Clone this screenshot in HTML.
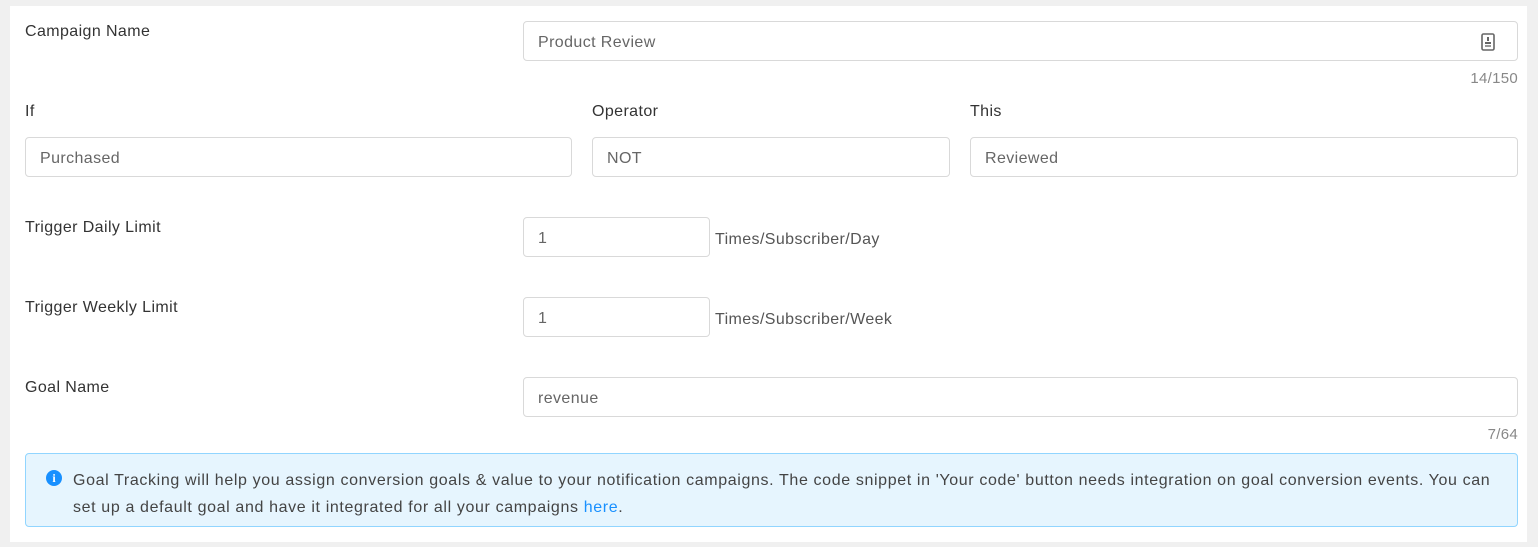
<!DOCTYPE html>
<html><head><style>
body{margin:0;width:1538px;height:547px;background:#f0f0f0;font-family:"Liberation Sans",sans-serif;color:#333;position:relative;overflow:hidden;letter-spacing:0.4px}
.card{position:absolute;left:10px;top:6px;width:1517px;height:536px;background:#fff}
.a{position:absolute}
.lbl{font-size:16px;color:#333}
.in{position:absolute;box-sizing:border-box;border:1px solid #d9d9d9;border-radius:4px;height:40px;font-size:16px;color:#666;padding:2px 14px 0;line-height:38px;background:#fff}
.cnt{font-size:15px;color:#888;text-align:right;letter-spacing:0.3px}
.info{position:absolute;left:25px;top:453px;width:1493px;height:74px;box-sizing:border-box;background:#e6f5fe;border:1px solid #91d5ff;border-radius:4px;padding:13px 10px 0 47px;font-size:16px;line-height:27px;color:#444;letter-spacing:0.63px;white-space:nowrap}
.ic{position:absolute;left:20px;top:16px;width:16px;height:16px;border-radius:50%;background:#1890ff;color:#fff;font-size:12px;font-weight:bold;text-align:center;line-height:16px;font-family:"Liberation Serif",serif;letter-spacing:0}
</style></head><body>
<div class="card"></div>
<div class="a lbl" style="left:25px;top:23px">Campaign Name</div>
<div class="in" style="left:523px;top:21px;width:995px">Product Review
<svg style="position:absolute;right:22px;top:11px" width="14" height="18" viewBox="0 0 14 18"><rect x="1" y="1" width="12" height="16" rx="1.5" fill="none" stroke="#666" stroke-width="1.6"/><rect x="6" y="4" width="2" height="4" fill="#666"/><rect x="4" y="9" width="6" height="2" fill="#666"/><rect x="4" y="12" width="6" height="2" fill="#999"/></svg></div>
<div class="a cnt" style="left:1400px;top:70px;width:118px">14/150</div>
<div class="a lbl" style="left:25px;top:103px">If</div>
<div class="a lbl" style="left:592px;top:103px">Operator</div>
<div class="a lbl" style="left:970px;top:103px">This</div>
<div class="in" style="left:25px;top:137px;width:547px">Purchased</div>
<div class="in" style="left:592px;top:137px;width:358px">NOT</div>
<div class="in" style="left:970px;top:137px;width:548px">Reviewed</div>
<div class="a lbl" style="left:25px;top:219px">Trigger Daily Limit</div>
<div class="in" style="left:523px;top:217px;width:187px">1</div>
<div class="a lbl" style="left:715px;top:231px;color:#555">Times/Subscriber/Day</div>
<div class="a lbl" style="left:25px;top:299px">Trigger Weekly Limit</div>
<div class="in" style="left:523px;top:297px;width:187px">1</div>
<div class="a lbl" style="left:715px;top:311px;color:#555">Times/Subscriber/Week</div>
<div class="a lbl" style="left:25px;top:379px">Goal Name</div>
<div class="in" style="left:523px;top:377px;width:995px">revenue</div>
<div class="a cnt" style="left:1400px;top:426px;width:118px">7/64</div>
<div class="info"><span class="ic">i</span>Goal Tracking will help you assign conversion goals &amp; value to your notification campaigns. The code snippet in 'Your code' button needs integration on goal conversion events. You can<br>set up a default goal and have it integrated for all your campaigns <span style="color:#1890ff">here</span>.</div>
</body></html>
